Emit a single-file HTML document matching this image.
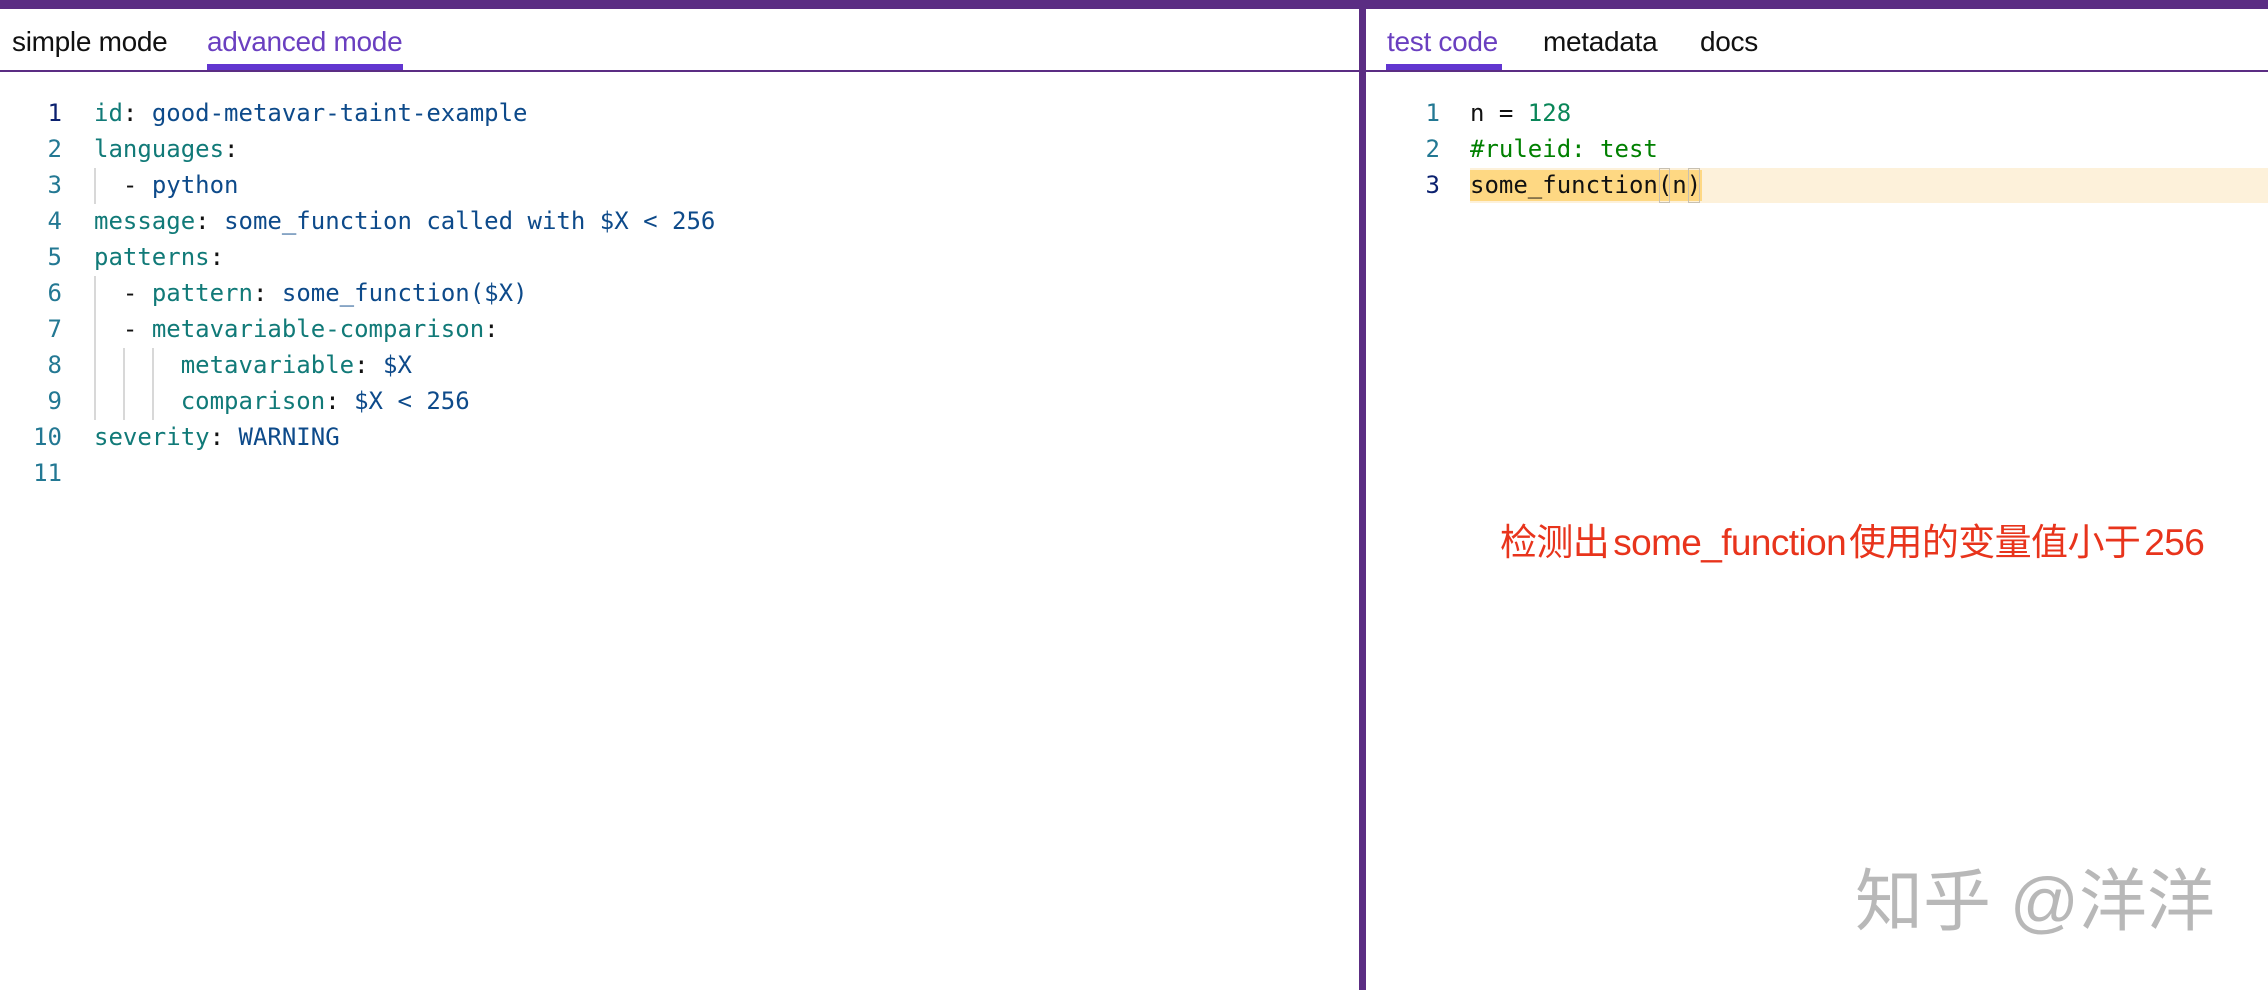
<!DOCTYPE html>
<html><head><meta charset="utf-8"><style>
body{margin:0;width:2268px;height:990px;background:#fff;position:relative;overflow:hidden;font-family:"Liberation Sans","Noto Sans CJK SC",sans-serif}
.top{position:absolute;left:0;top:0;width:2268px;height:9px;background:#5b2d83}
.vbar{position:absolute;left:1359px;top:0;width:7px;height:990px;background:#5b2d83}
.hl{position:absolute;top:70px;height:2px;background:#5b2d83}
.tab{position:absolute;top:24px;font-size:28px;color:#111;letter-spacing:-0.3px;line-height:36px}
.tab.a{color:#6a3fc0}
.ul{position:absolute;top:64px;height:6px;background:#6236d0}
.code{position:absolute;font-family:"DejaVu Sans Mono","Liberation Mono",monospace;font-size:24px;white-space:pre;line-height:36px}
.ln{position:absolute;width:50px;text-align:right;font-family:"DejaVu Sans Mono",monospace;font-size:24px;line-height:36px;color:#237893}
.k{color:#117a78}.v{color:#0d4a8a}.p{color:#111}
.g{position:absolute;width:2px;background:#d8d8d8}
</style></head><body>
<div class="top"></div>
<div class="vbar"></div>
<div class="hl" style="left:0;width:1359px"></div>
<div class="hl" style="left:1366px;width:902px"></div>
<div class="tab" style="left:12px">simple mode</div>
<div class="tab a" style="left:207px">advanced mode</div>
<div class="ul" style="left:207px;width:196px"></div>
<div class="tab a" style="left:1387px">test code</div>
<div class="tab" style="left:1543px">metadata</div>
<div class="tab" style="left:1700px">docs</div>
<div class="ul" style="left:1386px;width:116px"></div>

<div class="ln" style="left:12px;top:95px">1<br>2<br>3<br>4<br>5<br>6<br>7<br>8<br>9<br>10<br>11</div>
<div class="ln" style="left:12px;top:95px;color:#0b216f;background:#fff">1</div>
<div class="g" style="left:94px;top:168px;height:36px"></div>
<div class="g" style="left:94px;top:276px;height:144px"></div>
<div class="g" style="left:123px;top:348px;height:72px"></div>
<div class="g" style="left:152px;top:348px;height:72px"></div>
<div class="code" style="left:94px;top:95px"><span class="k">id</span><span class="p">: </span><span class="v">good-metavar-taint-example</span>
<span class="k">languages</span><span class="p">:</span>
  <span class="p">- </span><span class="v">python</span>
<span class="k">message</span><span class="p">: </span><span class="v">some_function called with $X &lt; 256</span>
<span class="k">patterns</span><span class="p">:</span>
  <span class="p">- </span><span class="k">pattern</span><span class="p">: </span><span class="v">some_function($X)</span>
  <span class="p">- </span><span class="k">metavariable-comparison</span><span class="p">:</span>
      <span class="k">metavariable</span><span class="p">: </span><span class="v">$X</span>
      <span class="k">comparison</span><span class="p">: </span><span class="v">$X &lt; 256</span>
<span class="k">severity</span><span class="p">: </span><span class="v">WARNING</span>
</div>

<div style="position:absolute;left:1470px;top:168px;width:798px;height:35px;background:#fdf1da"></div>
<div style="position:absolute;left:1470px;top:170px;width:232px;height:31px;background:#fed883"></div>
<div style="position:absolute;left:1659px;top:168px;width:11px;height:35px;border:1px solid #c8c0b0;box-sizing:border-box"></div>
<div style="position:absolute;left:1688px;top:168px;width:12px;height:35px;border:1px solid #c8c0b0;box-sizing:border-box"></div>
<div class="ln" style="left:1390px;top:95px">1<br>2<br><span style="color:#0b216f">3</span></div>
<div class="code" style="left:1470px;top:95px;color:#111">n = <span style="color:#098658">128</span>
<span style="color:#008000">#ruleid: test</span>
some_function(n)</div>

<div style="position:absolute;left:1500px;top:512px;font-size:37px;color:#e8341c;letter-spacing:-0.6px;white-space:nowrap">检测出<span style="margin-left:4px"></span>some_function<span style="margin-left:3px"></span>使用的变量值小于<span style="margin-left:4px"></span>256</div>
<div style="position:absolute;left:1855px;top:846px;font-size:68px;color:#b8b8b8;white-space:nowrap">知乎 @洋洋</div>
</body></html>
